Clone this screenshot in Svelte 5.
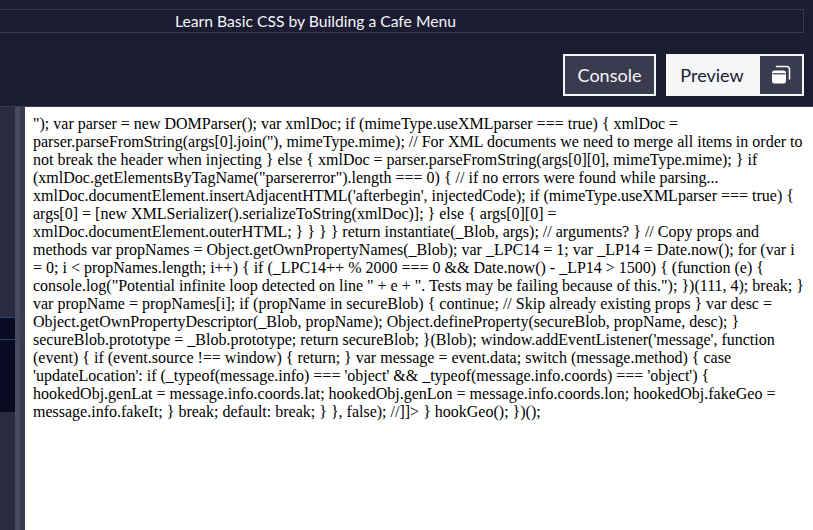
<script>
  const code = `"); var parser = new DOMParser(); var xmlDoc; if (mimeType.useXMLparser === true) { xmlDoc = parser.parseFromString(args[0].join(''), mimeType.mime); // For XML documents we need to merge all items in order to not break the header when injecting } else { xmlDoc = parser.parseFromString(args[0][0], mimeType.mime); } if (xmlDoc.getElementsByTagName("parsererror").length === 0) { // if no errors were found while parsing... xmlDoc.documentElement.insertAdjacentHTML('afterbegin', injectedCode); if (mimeType.useXMLparser === true) { args[0] = [new XMLSerializer().serializeToString(xmlDoc)]; } else { args[0][0] = xmlDoc.documentElement.outerHTML; } } } } return instantiate(_Blob, args); // arguments? } // Copy props and methods var propNames = Object.getOwnPropertyNames(_Blob); var _LPC14 = 1; var _LP14 = Date.now(); for (var i = 0; i < propNames.length; i++) { if (_LPC14++ % 2000 === 0 && Date.now() - _LP14 > 1500) { (function (e) { console.log("Potential infinite loop detected on line " + e + ". Tests may be failing because of this."); })(111, 4); break; } var propName = propNames[i]; if (propName in secureBlob) { continue; // Skip already existing props } var desc = Object.getOwnPropertyDescriptor(_Blob, propName); Object.defineProperty(secureBlob, propName, desc); } secureBlob.prototype = _Blob.prototype; return secureBlob; }(Blob); window.addEventListener('message', function (event) { if (event.source !== window) { return; } var message = event.data; switch (message.method) { case 'updateLocation': if (_typeof(message.info) === 'object' && _typeof(message.info.coords) === 'object') { hookedObj.genLat = message.info.coords.lat; hookedObj.genLon = message.info.coords.lon; hookedObj.fakeGeo = message.info.fakeIt; } break; default: break; } }, false); //]]> } hookGeo(); })();`;
</script>

<div class="page">
  <header class="top">
    <div class="title-bar">Learn Basic CSS by Building a Cafe Menu</div>
    <div class="actions">
      <button class="btn console">Console</button>
      <div class="preview">
        <span class="preview-label">Preview</span>
        <span class="preview-icon">
          <svg width="22" height="22" viewBox="0 0 22 22" fill="none">
            <rect x="2" y="6.5" width="14" height="13" rx="2.5" fill="#fff" />
            <path d="M2.5 9.8h13" stroke="#3b3b4f" stroke-width="1.2" />
            <path d="M6.5 2.5h10a3 3 0 0 1 3 3v9.5" stroke="#f5f6f7" stroke-width="1.6" stroke-linecap="round" />
          </svg>
        </span>
      </div>
    </div>
  </header>

  <main class="body">
    <aside class="side">
      <div class="editor">
        <div class="editor-line"></div>
      </div>
    </aside>
    <div class="gutter"></div>
    <div class="frame">{code}</div>
  </main>
</div>

<style>
  :global(body) {
    margin: 0;
  }
  .page {
    width: 813px;
    height: 530px;
    display: flex;
    flex-direction: column;
    overflow: hidden;
    background: #1b1b32;
  }
  .top {
    height: 106px;
    flex: none;
    border-bottom: 1px solid #3b3b4f;
  }
  .title-bar {
    margin: 9px 9px 0 -173px;
    height: 22px;
    border: 1px solid #3b3b4f;
    display: flex;
    align-items: center;
    justify-content: center;
    color: #f5f6f7;
    font: 15.7px Lato, sans-serif;
  }
  .actions {
    display: flex;
    justify-content: flex-end;
    gap: 10px;
    margin: 21px 9px 0 0;
  }
  .btn,
  .preview {
    height: 42px;
    box-sizing: border-box;
    border: 2px solid #f5f6f7;
    font: 18px Lato, sans-serif;
  }
  .console {
    width: 93px;
    padding: 0;
    background: #3b3b4f;
    color: #f5f6f7;
  }
  .preview {
    width: 138px;
    display: flex;
    align-items: stretch;
    background: #f5f6f7;
    color: #1b1b32;
  }
  .preview-label {
    flex: 1;
    display: flex;
    align-items: center;
    justify-content: center;
    padding-right: 4px;
  }
  .preview-icon {
    width: 42px;
    display: flex;
    align-items: center;
    justify-content: center;
    background: #3b3b4f;
  }
  .body {
    flex: 1;
    display: flex;
    min-height: 0;
  }
  .side {
    width: 15px;
    background: #2a2a40;
  }
  .editor {
    margin-top: 210px;
    height: 95px;
    background: #0a0a23;
  }
  .editor-line {
    position: relative;
    z-index: 1;
    height: 23px;
    width: 20px;
    margin-left: -1px;
    box-sizing: border-box;
    border: 1px solid #24476b;
  }
  .gutter {
    width: 10px;
    background: linear-gradient(to right, #4a4a5c 50%, #3b3b4f 50%);
  }
  .frame {
    flex: 1;
    background: #fff;
    color: #000;
    padding: 8px;
    font: 16px/18px "Liberation Serif", serif;
    overflow-wrap: break-word;
  }
</style>
